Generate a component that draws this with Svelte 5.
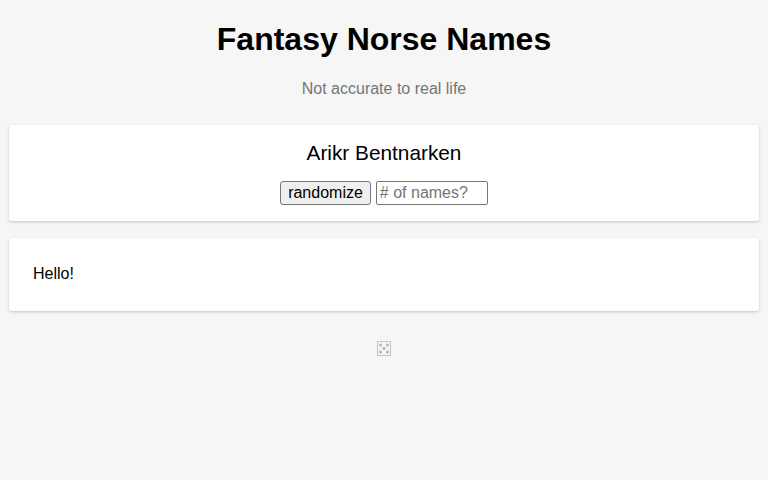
<script>
  let name = 'Arikr Bentnarken';
  const pips = [
    [4.5, 5],
    [11.5, 5],
    [8, 8.5],
    [4.5, 12],
    [11.5, 12]
  ];
</script>

<main>
  <h1>Fantasy Norse Names</h1>
  <p class="sub">Not accurate to real life</p>

  <section class="card generator">
    <h2>{name}</h2>
    <div class="controls">
      <button>randomize</button>
      <input type="text" placeholder="# of names?" />
    </div>
  </section>

  <section class="card hello">
    <p>Hello!</p>
  </section>

  <div class="dice">
    <svg width="16" height="17" viewBox="0 0 16 17" aria-label="dice">
      <rect x="1.5" y="1.5" width="13" height="14" fill="none" stroke="#c4c4c4" />
      {#each pips as [cx, cy]}
        <circle {cx} {cy} r="1.5" fill="#b4b4b4" />
      {/each}
    </svg>
  </div>
</main>

<style>
  :global(body) {
    background: #f6f6f6;
    font-family: "Liberation Sans", Arial, sans-serif;
  }

  main {
    padding: 0 9px;
    text-align: center;
  }

  h1 {
    margin: 0;
    padding-top: 21px;
    font-size: 32px;
    line-height: 37px;
    font-weight: bold;
    color: #000;
  }

  .sub {
    margin: 22px 0 0;
    font-size: 16px;
    line-height: 18px;
    color: #757575;
  }

  .card {
    background: #fff;
    border-radius: 2px;
    box-shadow: 0 1px 3px rgba(0, 0, 0, 0.2);
  }

  .generator {
    margin-top: 27px;
    padding: 16px 0;
  }

  h2 {
    margin: 0;
    font-size: 20.8px;
    line-height: 24px;
    font-weight: normal;
    color: #000;
  }

  .controls {
    margin-top: 16px;
    display: flex;
    justify-content: center;
    gap: 5px;
  }

  button {
    box-sizing: border-box;
    height: 24px;
    padding: 0 7px;
    background: #efefef;
    border: 1px solid #767676;
    border-radius: 3px;
    font: 16px "Liberation Sans", Arial, sans-serif;
    color: #000;
  }

  input {
    box-sizing: border-box;
    width: 112px;
    height: 24px;
    padding: 0 3px;
    border: 1px solid #767676;
    border-radius: 2px;
    font: 16px "Liberation Sans", Arial, sans-serif;
  }

  .hello {
    margin-top: 17px;
    padding: 23px 24px 24px;
    text-align: left;
  }

  .hello p {
    margin: 0;
    font-size: 16px;
    line-height: 26px;
    color: #000;
  }

  .dice {
    margin-top: 29px;
    display: flex;
    justify-content: center;
  }
</style>
